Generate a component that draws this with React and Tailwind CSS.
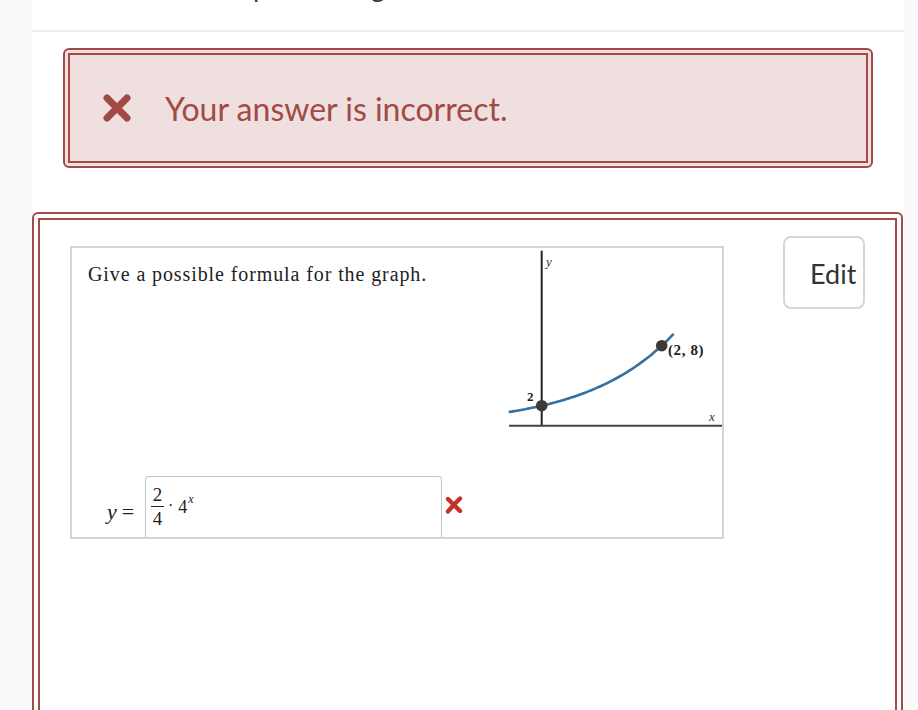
import React from 'react';

const serif = '"Liberation Serif", "DejaVu Serif", serif';

function Graph() {
    // y = 2 * 2^x, 60px per x unit, 10px per y unit
    const ox = 33.7;
    const oy = 177.7;
    const pts = [];
    for (let i = 0; i <= 60; i++) {
        const x = -0.55 + (2.75 * i) / 60;
        pts.push(`${(ox + 60 * x).toFixed(1)},${(oy - 20 * Math.pow(2, x)).toFixed(1)}`);
    }
    return (
        <svg width="214" height="182" viewBox="0 0 214 182" className="shrink-0">
            <line x1={ox} y1="2.7" x2={ox} y2={oy} stroke="#222" strokeWidth="2" />
            <line x1="1" y1={oy} x2="214" y2={oy} stroke="#444" strokeWidth="2" />
            <polyline points={pts.join(' ')} fill="none" stroke="#3470a0" strokeWidth="2.6" />
            <circle cx={ox} cy="157.7" r="5.8" fill="#3a3a3a" />
            <circle cx="153.7" cy="97.7" r="5.8" fill="#3a3a3a" />
            <text x="38" y="18" fontSize="13" fontStyle="italic" fill="#333" fontFamily={serif}>y</text>
            <text x="201" y="173" fontSize="13" fontStyle="italic" fill="#333" fontFamily={serif}>x</text>
            <text x="19" y="153" fontSize="13" fontWeight="bold" fill="#222" fontFamily={serif}>2</text>
            <text x="160" y="107" fontSize="15" fontWeight="bold" letterSpacing="0.6" fill="#222" fontFamily={serif}>(2, 8)</text>
        </svg>
    );
}

export default function App() {
    return (
        <div className="min-h-screen bg-[#fafafa]" style={{ fontFamily: 'Lato, "Open Sans", sans-serif' }}>
            <div className="ml-[32px] w-[872px] min-h-screen bg-white overflow-hidden">
                {/* Header (scrolled off) */}
                <div className="h-[32px] overflow-hidden relative border-b-2 border-[#ececec]">
                    <div className="absolute left-[192px] top-[-27px] text-[27px] leading-none text-[#2d3b45] whitespace-nowrap">
                        Exponential growth
                    </div>
                </div>

                {/* Result alert */}
                <div className="pt-[16px] pl-[31px]">
                    <div className="w-[810px] h-[120px] border-2 border-[#a34b47] rounded-[6px] bg-[#f0dfdf] p-[3px]">
                        <div className="h-full border-2 border-[#a34b47] flex items-center pl-[33px]">
                            <svg width="28" height="28" viewBox="0 0 28 28">
                                <path d="M4 4 L24 24 M24 4 L4 24" stroke="#a24a45" strokeWidth="7" strokeLinecap="round" />
                            </svg>
                            <span className="ml-[34px] mt-[2px] text-[32px] text-[#a24a45] leading-none">Your answer is incorrect.</span>
                        </div>
                    </div>
                </div>

                {/* Question */}
                <div className="mt-[44px] w-[871px] border-2 border-[#a34b47] border-b-0 rounded-t-[6px] pt-1 px-1">
                    <div className="h-[520px] border-2 border-b-0 border-[#a34b47] pl-[30px] pt-[16px] flex items-start">
                        <div className="mt-[10px] w-[654px] h-[293px] border-2 border-[#d4d4d4] flex flex-col">
                            <div className="flex">
                                <div className="flex-1 pl-[16px] pt-[11px] text-[20px] tracking-[0.9px] text-[#222]" style={{ fontFamily: serif }}>
                                    Give a possible formula for the graph.
                                </div>
                                <Graph />
                            </div>
                            <div className="mt-[46px] flex items-start" style={{ fontFamily: serif }}>
                                <div className="ml-[35px] mt-[25px] w-[38px] text-[22px] leading-[22px] text-[#222] whitespace-nowrap">
                                    <i>y</i><span className="ml-[5px]">=</span>
                                </div>
                                <div className="w-[297px] h-[61px] border border-b-0 border-[#c6c6c6] rounded-t-[4px] flex items-start pl-[5px] pt-[9px] text-[#222]">
                                    <div className="flex flex-col items-center">
                                        <span className="text-[19px] leading-[17px]">2</span>
                                        <span className="w-[13px] h-px bg-[#222] my-[3px]"></span>
                                        <span className="text-[19px] leading-[17px]">4</span>
                                    </div>
                                    <span className="ml-[4px] mt-[12px] text-[16px] leading-[16px]">·</span>
                                    <span className="ml-[5px] mt-[13px] text-[18px] leading-[17px]">4</span>
                                    <span className="ml-[1px] mt-[7px] text-[12px] italic leading-[12px]">x</span>
                                </div>
                                <svg width="18" height="18" viewBox="0 0 18 18" className="ml-[3px] mt-[20px]">
                                    <path d="M3 3 C7 7 11 11 15 15 M15 2.5 C11 6.5 7 10.5 3 15.5" stroke="#c4302b" strokeWidth="4.4" strokeLinecap="round" fill="none" />
                                </svg>
                            </div>
                        </div>
                        <div className="ml-[59px] w-[82px] h-[73px] border-2 border-[#d6d6d6] rounded-[8px] bg-white pl-[25px] pt-[22px] text-[27px] leading-[28px] text-[#333] whitespace-nowrap">
                            Edit
                        </div>
                    </div>
                </div>
            </div>
        </div>
    );
}
